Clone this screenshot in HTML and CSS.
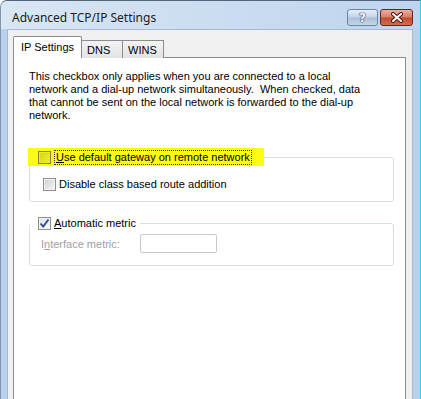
FILE: index.html
```html
<!DOCTYPE html>
<html lang="en">
<head>
    <meta charset="UTF-8">
    <title>Advanced TCP/IP Settings</title>
    <link rel="stylesheet" href="styles.css">
</head>
<body>
    <div class="window">
        <div class="titlebar">
            <span class="title">Advanced TCP/IP Settings</span>
            <div class="caption-buttons">
                <button class="cap-btn help"><span>?</span></button>
                <button class="cap-btn close">
                    <svg width="14" height="11" viewBox="0 0 14 11">
                        <path d="M3 2 L11 9 M11 2 L3 9" stroke="#4a1a12" stroke-width="4" stroke-linecap="round"/>
                        <path d="M3 2 L11 9 M11 2 L3 9" stroke="#fff" stroke-width="2" stroke-linecap="round"/>
                    </svg>
                </button>
            </div>
        </div>

        <div class="frame">
            <div class="client">
                <div class="tabs">
                    <div class="tab active">IP Settings</div>
                    <div class="tab">DNS</div>
                    <div class="tab">WINS</div>
                </div>

                <div class="panel">
                    <p class="note">This checkbox only applies when you are connected to a local<br>network and a dial-up network simultaneously.&nbsp; When checked, data<br>that cannot be sent on the local network is forwarded to the dial-up<br>network.</p>

                    <fieldset class="group gateway">
                        <legend class="legend highlight">
                            <span class="box marked"></span>
                            <span class="focus"><u>U</u>se default gateway on remote network</span>
                        </legend>
                        <div class="group-body">
                            <label class="check"><span class="box"></span>Disable class based route addition</label>
                        </div>
                    </fieldset>

                    <fieldset class="group metric">
                        <legend class="legend">
                            <span class="box checked">
                                <svg width="11" height="11" viewBox="0 0 11 11">
                                    <path d="M1.5 5.5 L4.2 8.5 L9.5 1.5" fill="none" stroke="#27468a" stroke-width="1.8"/>
                                </svg>
                            </span>
                            <span><u>A</u>utomatic metric</span>
                        </legend>
                        <div class="group-body">
                            <div class="field disabled">
                                <span class="field-label">I<u>n</u>terface metric:</span>
                                <span class="input"></span>
                            </div>
                        </div>
                    </fieldset>
                </div>
            </div>
        </div>
    </div>
</body>
</html>
```

FILE: styles.css
```css
:root {
    --frame: #bad1eb;
    --client: #f0f0f0;
    --tab-border: #898c95;
    --group-border: #d5dfe5;
    --text: #000;
    --text-disabled: #a0a0a0;
    --ui-font: "Liberation Sans", Arial, sans-serif;
}

* {
    box-sizing: border-box;
    margin: 0;
    padding: 0;
}

body {
    width: 421px;
    height: 399px;
    overflow: hidden;
    font-family: var(--ui-font);
    font-size: 11px;
    color: var(--text);
    background: #fff;
}

.window {
    width: 421px;
    height: 399px;
    display: flex;
    flex-direction: column;
    background: var(--frame);
    border-top: 1px solid #51657d;
    border-left: 1px solid #7f95ae;
    border-right: 1px solid #3ccbf0;
    border-top-left-radius: 7px;
    overflow: hidden;
}

/* title bar */

.titlebar {
    height: 28px;
    display: flex;
    align-items: flex-start;
    justify-content: space-between;
    padding: 8px 7px 0 11px;
    background: linear-gradient(to right, #d9e6f4, #c8dbf0 60%, #bfd5ee);
}

.title {
    font-family: "Noto Sans", "Open Sans", sans-serif;
    font-size: 12px;
    line-height: 17px;
    color: #1b1b1b;
}

.caption-buttons {
    display: flex;
    gap: 2px;
}

.cap-btn {
    height: 17px;
    border-radius: 3px;
    display: flex;
    align-items: center;
    justify-content: center;
    cursor: default;
}

.help {
    width: 31px;
    border: 1px solid #6f849e;
    background: linear-gradient(#e6eef7, #c3d4e7 48%, #a9bfd8 52%, #c4d6ea);
}

.help span {
    font-family: "DejaVu Sans", sans-serif;
    font-weight: bold;
    font-size: 12px;
    line-height: 12px;
    color: #f4f7fb;
    text-shadow: 0 0 1px #2e3e55, 0 0 1px #2e3e55, 0 0 1px #2e3e55;
}

.close {
    width: 33px;
    border: 1px solid #6b231a;
    background: linear-gradient(#eab0a3, #d77d68 48%, #c34a30 52%, #d46b51);
}

/* window body */

.frame {
    flex: 1;
    display: flex;
    padding: 0 7px 0 6px;
}

.client {
    flex: 1;
    display: flex;
    flex-direction: column;
    background: var(--client);
    border: 1px solid #a5b9d0;
    border-bottom: none;
    padding: 7px 6px 0 5px;
}

.tabs {
    height: 21px;
    display: flex;
    align-items: flex-end;
    margin-bottom: -1px;
    position: relative;
    z-index: 1;
}

.tab {
    height: 18px;
    min-width: 41px;
    padding: 2px 5px 0;
    border: 1px solid var(--tab-border);
    border-bottom: none;
    border-left-width: 0;
    background: linear-gradient(#f3f3f3, #e3e3e3);
    font-size: 11px;
    line-height: 14px;
}

.tab.active {
    height: 22px;
    width: 69px;
    padding: 3px 7px 0;
    border-left-width: 1px;
    border-radius: 2px 2px 0 0;
    background: #fff;
}

.panel {
    flex: 1;
    background: #fff;
    border: 1px solid var(--tab-border);
    border-bottom: none;
    padding: 12px 11px 0 15px;
}

.note {
    line-height: 13px;
    margin-bottom: 26px;
}

/* group boxes */

.group {
    border: 1px solid var(--group-border);
    border-radius: 3px;
    padding: 0;
}

.legend {
    display: flex;
    align-items: center;
    gap: 3px;
    height: 16px;
    padding: 0 4px 0 8px;
}

.highlight {
    height: 18px;
    margin-left: -2px;
    padding: 0 12px 0 10px;
    background: #fbfb14;
}

.focus {
    border: 1px dotted #3a3a20;
    padding: 0 1px;
    line-height: 13px;
}

.box {
    width: 13px;
    height: 13px;
    flex: none;
    border: 1px solid #8e8f8f;
    background: linear-gradient(135deg, #cdd0d5, #f6f6f6);
    box-shadow: inset 0 0 0 1px #f4f4f4;
    display: flex;
    align-items: center;
    justify-content: center;
}

.box.marked {
    border-color: #85853c;
    background: linear-gradient(135deg, #d3d31a, #f0f02a);
    box-shadow: inset 0 0 0 1px #eaea30;
}

.box.checked {
    background: linear-gradient(135deg, #dfe3e8, #fbfbfb);
}

.gateway .group-body {
    padding: 11px 10px 10px 13px;
}

.check {
    display: flex;
    align-items: center;
    gap: 3px;
    height: 14px;
}

.metric {
    margin-top: 13px;
}

.metric .group-body {
    padding: 3px 10px 12px 11px;
}

.field {
    display: flex;
    align-items: center;
}

.field-label {
    width: 99px;
}

.disabled {
    color: var(--text-disabled);
}

.input {
    width: 77px;
    height: 19px;
    border: 1px solid #c8c8c8;
    border-radius: 2px;
    background: #fff;
}
```
